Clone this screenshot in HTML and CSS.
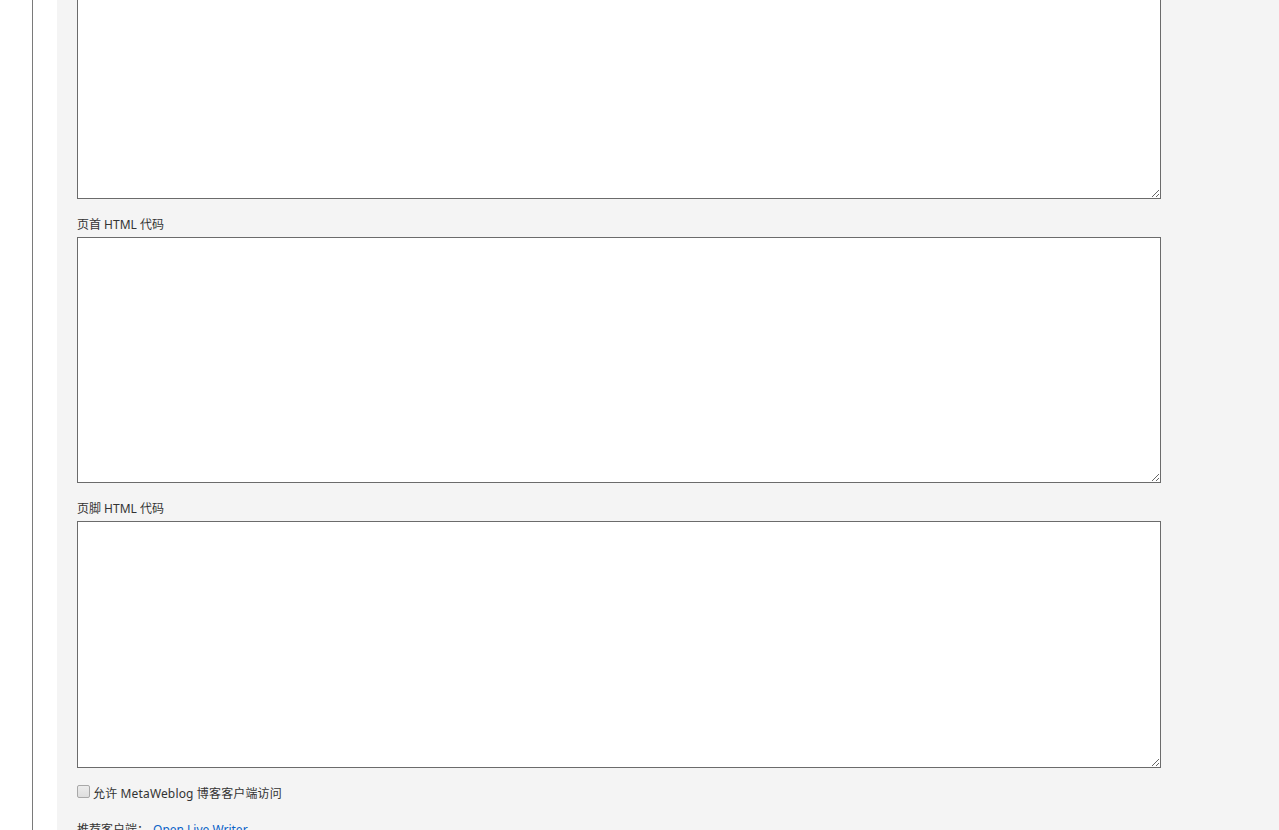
FILE: index.html
```html
<!DOCTYPE html>
<html lang="zh-CN">
<head>
<meta charset="utf-8">
<title>设置</title>
<link rel="stylesheet" href="styles.css">
</head>
<body>
<div class="page">
  <div class="side"></div>
  <div class="gap"></div>
  <div class="main">
    <form class="form">
      <textarea class="code"></textarea>
      <label class="field-label">页首 HTML 代码</label>
      <textarea class="code"></textarea>
      <label class="field-label">页脚 HTML 代码</label>
      <textarea class="code code-last"></textarea>
      <div class="check-row">
        <input type="checkbox" class="check" id="mw">
        <label for="mw" class="check-text">允许 MetaWeblog 博客客户端访问</label>
      </div>
      <div class="client-row">推荐客户端：<a href="#" class="link">Open Live Writer</a></div>
    </form>
  </div>
</div>
</body>
</html>
```
FILE: styles.css
```css
html, body {
  margin: 0;
  padding: 0;
  height: 100%;
  overflow: hidden;
}
body {
  font-family: "Noto Sans", "Noto Sans CJK SC", sans-serif;
  font-size: 12px;
  color: #333;
  background: #fff;
}
.page {
  display: flex;
  min-height: 830px;
}
.side {
  width: 32px;
  flex: none;
  background: #fff;
  border-right: 1px solid #7a7a7a;
}
.gap {
  width: 24px;
  flex: none;
  background: #fff;
}
.main {
  flex: 1;
  background: #f4f4f4;
  padding: 0 20px;
}
.form {
  margin-top: -47px;
  width: 1084px;
}
.code {
  display: block;
  box-sizing: border-box;
  width: 1084px;
  height: 246px;
  margin: 0;
  border: 1px solid #6b6b6b;
  border-radius: 0;
  background: #fff;
  padding: 2px;
  font-family: "Liberation Mono", monospace;
}
.code-last {
  height: 247px;
}
.field-label {
  display: block;
  line-height: 18px;
  margin: 17px 0 3px;
}
.check-row {
  display: flex;
  align-items: flex-start;
  line-height: 18px;
  margin-top: 17px;
}
.check {
  appearance: none;
  -webkit-appearance: none;
  width: 13px;
  height: 13px;
  margin: 0 3px 0 0;
  box-sizing: border-box;
  border: 1px solid #a8a8a8;
  border-radius: 2px;
  background: linear-gradient(#ececec, #dedede);
}
.check-text {
  letter-spacing: 0.15px;
}
.client-row {
  line-height: 18px;
  margin-top: 18px;
}
.link {
  color: #0a62c7;
  text-decoration: none;
  margin-left: 4px;
}
```
